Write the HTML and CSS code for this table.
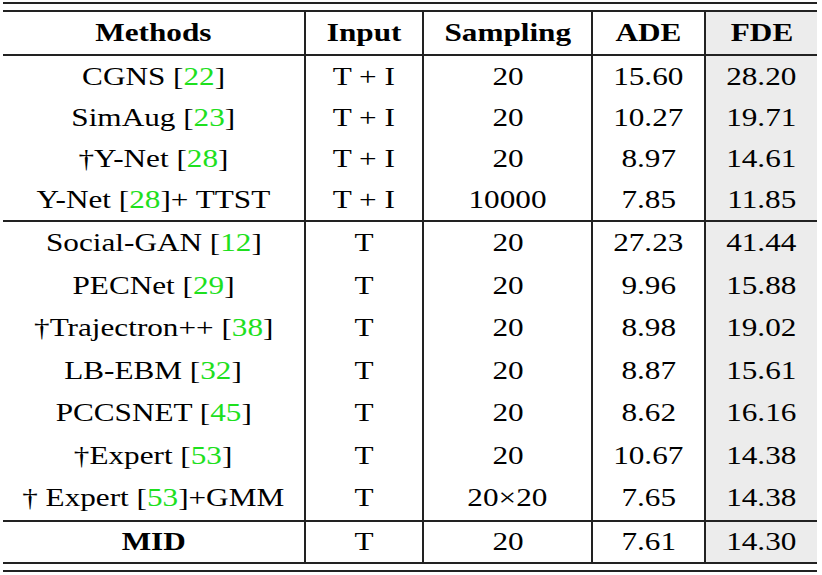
FILE: index.html
```html
<!DOCTYPE html>
<html lang="en">
<head>
    <meta charset="UTF-8">
    <title>Results</title>
    <link rel="stylesheet" href="styles.css">
</head>
<body>
<div class="frame">
    <table class="results">
        <colgroup>
            <col class="c-method">
            <col class="c-input">
            <col class="c-sampling">
            <col class="c-ade">
            <col class="c-fde">
        </colgroup>
        <thead>
            <tr>
                <th><span class="t">Methods</span></th>
                <th><span class="t">Input</span></th>
                <th><span class="t">Sampling</span></th>
                <th><span class="t">ADE</span></th>
                <th class="hl"><span class="t">FDE</span></th>
            </tr>
        </thead>
        <tbody class="multi">
            <tr>
                <td><span class="t">CGNS [<span class="ref">22</span>]</span></td>
                <td><span class="t">T + I</span></td>
                <td><span class="t">20</span></td>
                <td><span class="t">15.60</span></td>
                <td class="hl"><span class="t">28.20</span></td>
            </tr>
            <tr>
                <td><span class="t">SimAug [<span class="ref">23</span>]</span></td>
                <td><span class="t">T + I</span></td>
                <td><span class="t">20</span></td>
                <td><span class="t">10.27</span></td>
                <td class="hl"><span class="t">19.71</span></td>
            </tr>
            <tr>
                <td><span class="t">&dagger;Y-Net [<span class="ref">28</span>]</span></td>
                <td><span class="t">T + I</span></td>
                <td><span class="t">20</span></td>
                <td><span class="t">8.97</span></td>
                <td class="hl"><span class="t">14.61</span></td>
            </tr>
            <tr>
                <td><span class="t">Y-Net [<span class="ref">28</span>]+ TTST</span></td>
                <td><span class="t">T + I</span></td>
                <td><span class="t">10000</span></td>
                <td><span class="t">7.85</span></td>
                <td class="hl"><span class="t">11.85</span></td>
            </tr>
        </tbody>
        <tbody class="traj">
            <tr>
                <td><span class="t">Social-GAN [<span class="ref">12</span>]</span></td>
                <td><span class="t">T</span></td>
                <td><span class="t">20</span></td>
                <td><span class="t">27.23</span></td>
                <td class="hl"><span class="t">41.44</span></td>
            </tr>
            <tr>
                <td><span class="t">PECNet [<span class="ref">29</span>]</span></td>
                <td><span class="t">T</span></td>
                <td><span class="t">20</span></td>
                <td><span class="t">9.96</span></td>
                <td class="hl"><span class="t">15.88</span></td>
            </tr>
            <tr>
                <td><span class="t">&dagger;Trajectron++ [<span class="ref">38</span>]</span></td>
                <td><span class="t">T</span></td>
                <td><span class="t">20</span></td>
                <td><span class="t">8.98</span></td>
                <td class="hl"><span class="t">19.02</span></td>
            </tr>
            <tr>
                <td><span class="t">LB-EBM [<span class="ref">32</span>]</span></td>
                <td><span class="t">T</span></td>
                <td><span class="t">20</span></td>
                <td><span class="t">8.87</span></td>
                <td class="hl"><span class="t">15.61</span></td>
            </tr>
            <tr>
                <td><span class="t">PCCSNET [<span class="ref">45</span>]</span></td>
                <td><span class="t">T</span></td>
                <td><span class="t">20</span></td>
                <td><span class="t">8.62</span></td>
                <td class="hl"><span class="t">16.16</span></td>
            </tr>
            <tr>
                <td><span class="t">&dagger;Expert [<span class="ref">53</span>]</span></td>
                <td><span class="t">T</span></td>
                <td><span class="t">20</span></td>
                <td><span class="t">10.67</span></td>
                <td class="hl"><span class="t">14.38</span></td>
            </tr>
            <tr>
                <td><span class="t">&dagger; Expert [<span class="ref">53</span>]+GMM</span></td>
                <td><span class="t">T</span></td>
                <td><span class="t">20&times;20</span></td>
                <td><span class="t">7.65</span></td>
                <td class="hl"><span class="t">14.38</span></td>
            </tr>
        </tbody>
        <tbody class="ours">
            <tr>
                <td><span class="t"><b>MID</b></span></td>
                <td><span class="t">T</span></td>
                <td><span class="t">20</span></td>
                <td><span class="t">7.61</span></td>
                <td class="hl"><span class="t">14.30</span></td>
            </tr>
        </tbody>
    </table>
</div>
</body>
</html>
```

FILE: styles.css
```css
body {
    margin: 0;
    font-family: "Liberation Serif", "Times New Roman", serif;
    font-size: 26px;
    color: #000;
    background: #fff;
}

/* outer rule of the double lines */
.frame {
    width: 814px;
    margin: 2px 0 0 3px;
    border-top: 2px solid #222;
    border-bottom: 2px solid #222;
    padding: 6px 0;
}

.results {
    width: 100%;
    border-collapse: collapse;
    table-layout: fixed;
    border-top: 2px solid #222;
    border-bottom: 2px solid #222;
}

.c-method { width: 302px; }
.c-input { width: 118px; }
.c-sampling { width: 169px; }
.c-ade { width: 113px; }
.c-fde { width: 112px; }

th, td {
    text-align: center;
    padding: 0;
    height: 42px;
    border-left: 2px solid #222;
    white-space: nowrap;
}

th:first-child, td:first-child {
    border-left: none;
}

th {
    font-weight: bold;
    border-bottom: 2px solid #222;
}

tbody + tbody {
    border-top: 2px solid #222;
}

.multi td {
    height: 41px;
}

.traj td {
    height: 42.5px;
}

.ours td {
    height: 40px;
}

/* the source is stretched wider than Times */
.t {
    display: inline-block;
    transform: scaleX(1.2);
}

.ref {
    color: #1ee01e;
}

.hl {
    background: #ececec;
}
```
